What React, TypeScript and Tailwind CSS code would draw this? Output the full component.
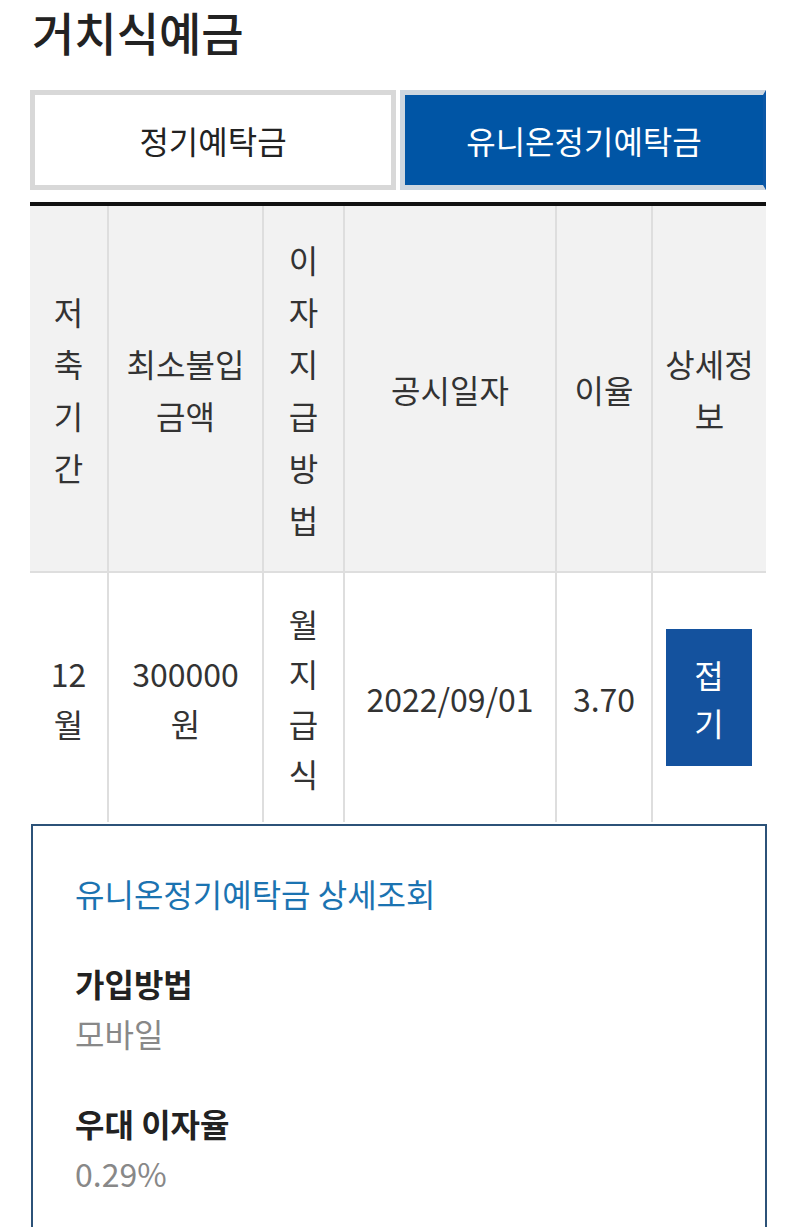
const font = { fontFamily: '"Noto Sans CJK KR", "Noto Sans", sans-serif' };

const headers = [
  { w: "w-[78px]", lines: ["저", "축", "기", "간"] },
  { w: "w-[155px]", lines: ["최소불입", "금액"] },
  { w: "w-[81px]", lines: ["이", "자", "지", "급", "방", "법"] },
  { w: "w-[212px]", lines: ["공시일자"] },
  { w: "w-[96px]", lines: ["이율"] },
  { w: "w-[114px]", lines: ["상세정", "보"] },
];

const row = [["12", "월"], ["300000", "원"], ["월", "지", "급", "식"], ["2022/09/01"], ["3.70"]];

function Lines({ lines }: { lines: string[] }) {
  return (
    <>
      {lines.map((l, i) => (
        <div key={i}>{l}</div>
      ))}
    </>
  );
}

export default function App() {
  return (
    <div className="min-h-[1227px] bg-white px-[30px] text-[#333]" style={font}>
      <h1 className="pt-[6px] pl-[2px] text-[46px] font-medium leading-[50px] text-[#222]">
        거치식예금
      </h1>

      <div className="mt-[34px] flex h-[100px] gap-[4px]">
        <button className="flex w-[366px] items-center justify-center border-[5px] border-[#d8d8d8] bg-white text-[32px] text-[#222]">
          정기예탁금
        </button>
        <button className="flex w-[366px] items-center justify-center border-[5px] border-r-[3px] border-[#cdd6df] border-r-[#0b57a6] bg-[#0055a5] text-[32px] text-white">
          유니온정기예탁금
        </button>
      </div>

      <table className="mt-[12px] w-[736px] table-fixed border-collapse border-t-[4px] border-t-[#111] text-center text-[32px]">
        <thead>
          <tr className="h-[368px] bg-[#f2f2f2] leading-[52px]">
            {headers.map((h, i) => (
              <th
                key={i}
                className={`${h.w} border-x-2 border-b-2 border-[#dedede] align-middle font-normal first:border-l-0 last:border-r-0`}
              >
                <Lines lines={h.lines} />
              </th>
            ))}
          </tr>
        </thead>
        <tbody>
          <tr className="h-[250px] leading-[50px]">
            {row.map((c, i) => (
              <td key={i} className="border-x-2 border-[#dedede] align-middle first:border-l-0">
                <Lines lines={c} />
              </td>
            ))}
            <td className="border-l-2 border-[#dedede] align-middle">
              <div className="ml-[13px] flex h-[137px] w-[86px] flex-col items-center justify-center bg-[#14529e] leading-[48px] text-white">
                <div>접</div>
                <div>기</div>
              </div>
            </td>
          </tr>
        </tbody>
      </table>

      <div className="mt-[2px] ml-px h-[410px] w-[736px] border-2 border-b-0 border-[#2c5278] px-[42px] pt-[42px] text-[32px] leading-[50px]">
        <div className="text-[#1b73b1]">유니온정기예탁금 상세조회</div>
        <div className="mt-[40px] font-bold text-[#222]">가입방법</div>
        <div className="text-[#888]">모바일</div>
        <div className="mt-[40px] font-bold text-[#222]">우대 이자율</div>
        <div className="text-[#888]">0.29%</div>
      </div>
    </div>
  );
}
